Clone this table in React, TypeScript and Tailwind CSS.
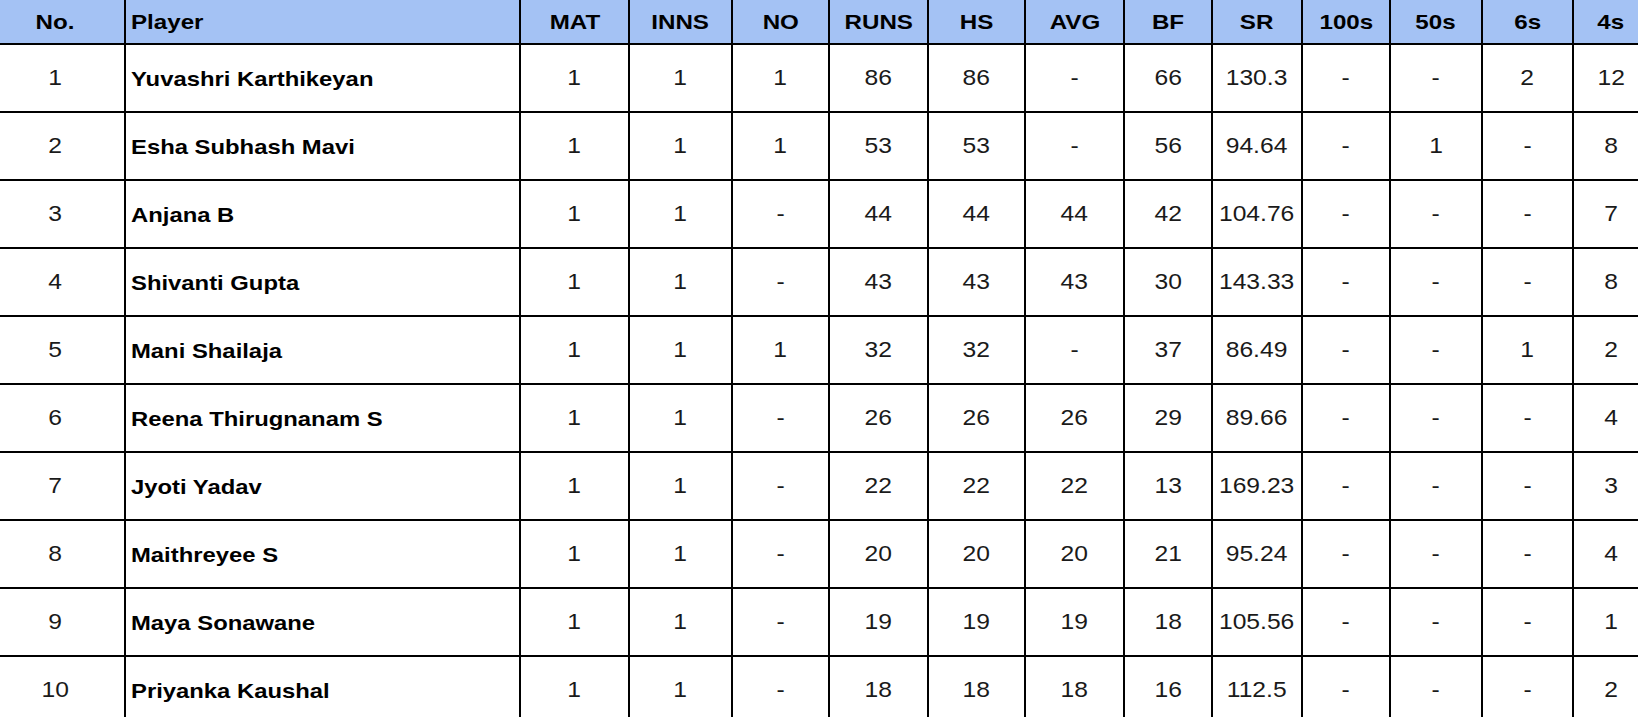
const headers = ["No.", "Player", "MAT", "INNS", "NO", "RUNS", "HS", "AVG", "BF", "SR", "100s", "50s", "6s", "4s"];

const rows: (string | number)[][] = [
  [1, "Yuvashri Karthikeyan", 1, 1, 1, 86, 86, "-", 66, "130.3", "-", "-", 2, 12],
  [2, "Esha Subhash Mavi", 1, 1, 1, 53, 53, "-", 56, "94.64", "-", 1, "-", 8],
  [3, "Anjana B", 1, 1, "-", 44, 44, 44, 42, "104.76", "-", "-", "-", 7],
  [4, "Shivanti Gupta", 1, 1, "-", 43, 43, 43, 30, "143.33", "-", "-", "-", 8],
  [5, "Mani Shailaja", 1, 1, 1, 32, 32, "-", 37, "86.49", "-", "-", 1, 2],
  [6, "Reena Thirugnanam S", 1, 1, "-", 26, 26, 26, 29, "89.66", "-", "-", "-", 4],
  [7, "Jyoti Yadav", 1, 1, "-", 22, 22, 22, 13, "169.23", "-", "-", "-", 3],
  [8, "Maithreyee S", 1, 1, "-", 20, 20, 20, 21, "95.24", "-", "-", "-", 4],
  [9, "Maya Sonawane", 1, 1, "-", 19, 19, 19, 18, "105.56", "-", "-", "-", 1],
  [10, "Priyanka Kaushal", 1, 1, "-", 18, 18, 18, 16, "112.5", "-", "-", "-", 2],
];

// column widths measured off the screenshot
const grid = "grid grid-cols-[124px_395px_109px_103px_97px_99px_97px_99px_88px_90px_88px_92px_91px_76px]";

function cellClass(i: number) {
  if (i === 0) return "flex items-center justify-center pr-[14px]";
  if (i === 1) return "flex items-center border-l-2 border-black pl-[5px]";
  return "flex items-center justify-center border-l-2 border-black";
}

// the source image is stretched sideways, so the glyphs are widened a bit
function Txt({ v, left, cls }: { v: string | number; left?: boolean; cls: string }) {
  return <span className={`inline-block ${left ? "origin-left" : "origin-center"} ${cls}`}>{v}</span>;
}

export default function App() {
  return (
    <div
      className="w-[1638px] h-[717px] overflow-hidden bg-white leading-none"
      style={{ fontFamily: '"Liberation Sans", Arial, sans-serif' }}
    >
      <div className={`${grid} h-[45px] bg-[#a4c2f4] border-b-2 border-black font-bold text-black text-[21px]`}>
        {headers.map((h, i) => (
          <div key={h} className={cellClass(i)}>
            <Txt v={h} left={i === 1} cls="scale-x-[1.15]" />
          </div>
        ))}
      </div>
      {rows.map((r) => (
        <div key={r[0]} className={`${grid} h-[68px] border-b-2 border-black`}>
          {r.map((v, i) => (
            <div key={i} className={cellClass(i)}>
              {i === 1 ? (
                <Txt v={v} left cls="text-[21px] font-bold text-black scale-x-[1.135]" />
              ) : (
                <Txt v={v} cls="text-[22px] text-[#1a1a1a] scale-x-[1.12]" />
              )}
            </div>
          ))}
        </div>
      ))}
    </div>
  );
}
